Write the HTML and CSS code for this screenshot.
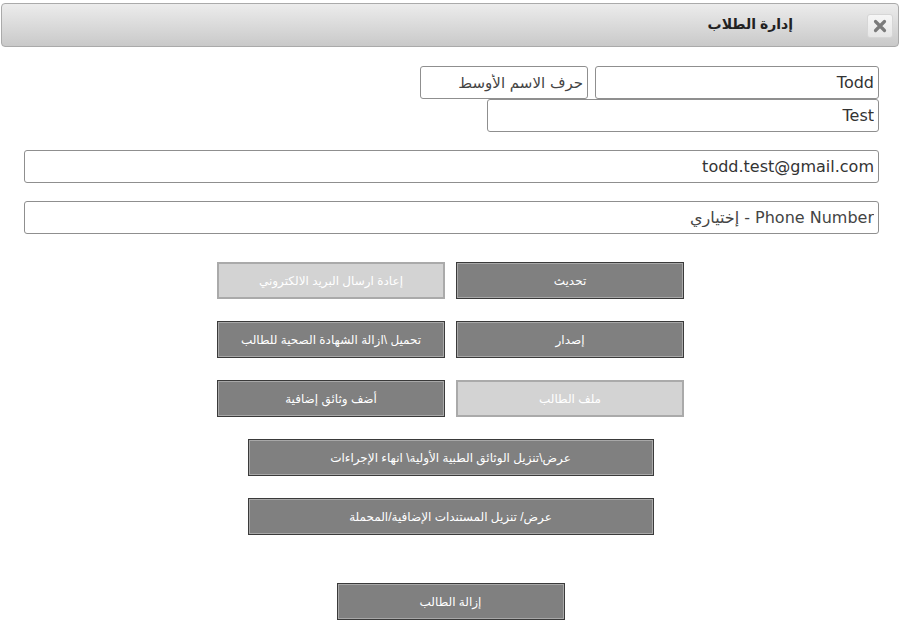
FILE: index.html
```html
<!DOCTYPE html>
<html lang="ar" dir="rtl">
<head>
<meta charset="utf-8">
<link rel="stylesheet" href="styles.css">
</head>
<body>
<div class="dialog">
  <div class="titlebar">
    <button class="close" type="button" aria-label="close">
      <svg width="14" height="14" viewBox="0 0 14 14"><path d="M2.5 2.5 L11.5 11.5 M11.5 2.5 L2.5 11.5" stroke="#7a7a7a" stroke-width="3.2" stroke-linecap="round"/></svg>
    </button>
    <span class="title">إدارة الطلاب</span>
  </div>
  <div class="form">
    <div class="name-row">
      <input class="field first" type="text" value="Todd">
      <input class="field middle" type="text" placeholder="حرف الاسم الأوسط">
    </div>
    <div class="last-row">
      <input class="field last" type="text" value="Test">
    </div>
    <input class="field wide" type="text" value="todd.test@gmail.com">
    <input class="field wide phone" type="text" placeholder="Phone Number - إختياري">
  </div>
  <div class="actions">
    <div class="grid">
      <button class="btn" type="button">تحديث</button>
      <button class="btn disabled" type="button">إعادة ارسال البريد الالكتروني</button>
      <button class="btn" type="button">إصدار</button>
      <button class="btn" type="button">تحميل \ازالة الشهادة الصحية للطالب</button>
      <button class="btn disabled" type="button">ملف الطالب</button>
      <button class="btn" type="button">أضف وثائق إضافية</button>
    </div>
    <button class="btn long" type="button">عرض\تنزيل الوثائق الطبية الأولية\ انهاء الإجراءات</button>
    <button class="btn long" type="button">عرض/ تنزيل المستندات الإضافية/المحملة</button>
    <button class="btn remove" type="button">إزالة الطالب</button>
  </div>
</div>
</body>
</html>
```
FILE: styles.css
```css
html, body {
  margin: 0;
  padding: 0;
  background: #fff;
}
body {
  font-family: "DejaVu Sans", "Liberation Sans", sans-serif;
}
.dialog {
  width: 900px;
  height: 629px;
  padding-top: 3px;
  box-sizing: border-box;
}
.titlebar {
  margin: 0 1px;
  height: 44px;
  box-sizing: border-box;
  border: 1px solid #aaa;
  border-radius: 4px;
  background: linear-gradient(#ececec, #c9c9c9);
  display: flex;
  align-items: center;
  padding-right: 5px;
  padding-left: 6px;
}
.title {
  font-family: "Liberation Sans", "DejaVu Sans", sans-serif;
  font-weight: bold;
  font-size: 14px;
  color: #222;
  margin-right: 74px;
  padding-bottom: 2px;
}
.close {
  width: 26px;
  height: 24px;
  border: 1px solid #d6d6d6;
  border-radius: 3px;
  background: linear-gradient(#f6f6f6, #e6e6e6);
  padding: 0;
  display: flex;
  align-items: center;
  justify-content: center;
  margin-top: 1px;
}
.form {
  padding: 19px 21px 0 24px;
  display: flex;
  flex-direction: column;
  align-items: flex-start;
}
.field {
  height: 33px;
  box-sizing: border-box;
  border: 1px solid #8f8f8f;
  border-radius: 3px;
  font-family: "DejaVu Sans", sans-serif;
  font-size: 16px;
  color: #333;
  text-align: right;
  direction: ltr;
  padding: 0 4px;
  background: #fff;
  margin: 0;
}
.field::placeholder {
  color: #444;
  opacity: 1;
}
.name-row {
  display: flex;
  gap: 7px;
}
.first { width: 284px; }
.middle { width: 168px; direction: rtl; font-size: 15px; }
.last { width: 392px; }
.wide {
  width: 855px;
  align-self: stretch;
  margin-top: 18px;
}
.phone { direction: rtl; }
.actions {
  padding: 28px 0 0 1px;
  display: flex;
  flex-direction: column;
  align-items: center;
}
.grid {
  display: grid;
  grid-template-columns: 228px 228px;
  column-gap: 11px;
  row-gap: 22px;
}
.btn {
  height: 37px;
  width: 228px;
  box-sizing: border-box;
  background: #808080;
  border: 1px solid #3a3a3a;
  box-shadow: inset 1px 1px 0 #a8a8a8, inset -1px -1px 0 #a8a8a8;
  color: #fff;
  font-family: "Liberation Sans", "DejaVu Sans", sans-serif;
  font-size: 12px;
  padding: 0 4px;
  margin: 0;
}
.btn.disabled {
  background: #d3d3d3;
  border: 2px solid #aaa;
  box-shadow: none;
  color: #fff;
}
.btn.long {
  width: 406px;
  margin-top: 22px;
}
.btn.remove {
  margin-top: 48px;
}
```
